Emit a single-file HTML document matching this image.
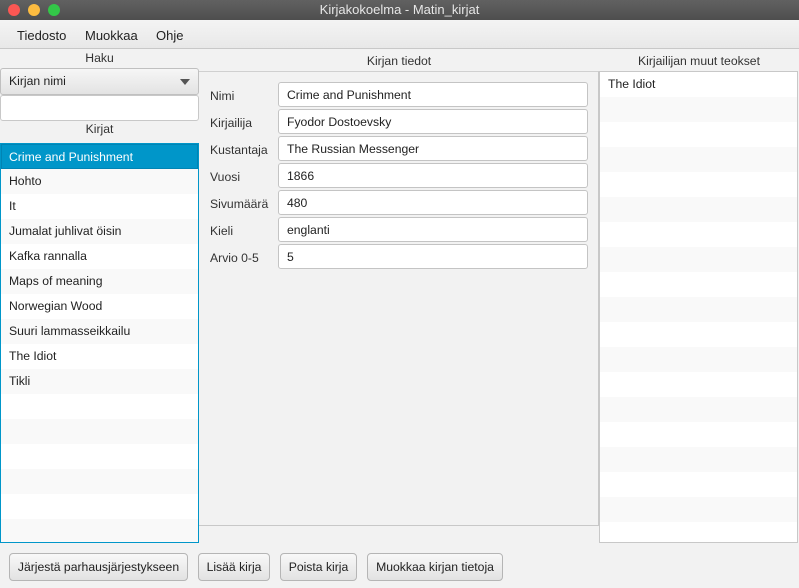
<!DOCTYPE html>
<html><head><meta charset="utf-8"><style>
*{box-sizing:border-box;margin:0;padding:0}
body{width:799px;height:588px;background:#f2f2f2;font-family:"Liberation Sans",sans-serif;font-size:12.2px;color:#333;position:relative;overflow:hidden}
.a{position:absolute}
.title{left:0;top:0;width:799px;height:20px;background:linear-gradient(#616161,#4e4e4e);color:#e6e6e6;text-align:center;line-height:20px;font-size:13px}
.dot{top:4px;width:12px;height:12px;border-radius:50%}
.menu{left:0;top:20px;width:799px;height:29px;background:linear-gradient(#f4f4f4,#e8e8e8);border-bottom:1px solid #c8c8c8}
.menu span{position:absolute;top:8px;font-size:13px;color:#222}
.lbl{text-align:center;color:#333}
.list{background:#fff;overflow:hidden}
.row{height:25px;line-height:25px;padding-left:8px;color:#222}
.row:nth-child(even){background:#f9f9f9}
.sel{background:#0096c9!important;color:#fff}
.field{left:278px;width:310px;height:25px;background:#fff;border:1px solid #c4c4c4;border-radius:3px;line-height:25px;padding-left:8px;color:#222}
.fl{left:210px;color:#333}
.btn{top:553px;height:28px;border:1px solid #b5b5b5;border-radius:4px;background:linear-gradient(#f8f8f8,#e2e2e2);line-height:26px;text-align:center;color:#222}
</style></head><body>
<div class="a title">Kirjakokoelma - Matin_kirjat</div>
<div class="a dot" style="left:8px;background:#fc5753"></div>
<div class="a dot" style="left:28px;background:#fdbc40"></div>
<div class="a dot" style="left:48px;background:#33c748"></div>
<div class="a menu"><span style="left:17px">Tiedosto</span><span style="left:85px">Muokkaa</span><span style="left:156px">Ohje</span></div>

<div class="a lbl" style="left:0;top:51px;width:199px">Haku</div>
<div class="a" style="left:0;top:68px;width:199px;height:27px;border:1px solid #c0c0c0;border-radius:3px;background:linear-gradient(#f6f6f6,#e3e3e3);line-height:25px;padding-left:8px;color:#222">Kirjan nimi<span style="position:absolute;right:8px;top:10px;border-left:5px solid transparent;border-right:5px solid transparent;border-top:6px solid #555"></span></div>
<div class="a" style="left:0;top:95px;width:199px;height:26px;background:#fff;border:1px solid #c8c8c8;border-radius:3px"></div>
<div class="a lbl" style="left:0;top:122px;width:199px">Kirjat</div>
<div class="a list" style="left:0;top:143px;width:199px;height:400px;border:1px solid #0096c9">
<div class="row sel" style="border:1px solid #0084b4;padding-left:7px">Crime and Punishment</div>
<div class="row">Hohto</div><div class="row">It</div><div class="row">Jumalat juhlivat öisin</div><div class="row">Kafka rannalla</div><div class="row">Maps of meaning</div><div class="row">Norwegian Wood</div><div class="row">Suuri lammasseikkailu</div><div class="row">The Idiot</div><div class="row">Tikli</div><div class="row"></div><div class="row"></div><div class="row"></div><div class="row"></div><div class="row"></div><div class="row"></div><div class="row"></div>
</div>

<div class="a" style="left:199px;top:71px;width:400px;height:455px;border-top:1px solid #d0d0d0;border-bottom:1px solid #c8c8c8;border-right:1px solid #c8c8c8"></div>
<div class="a lbl" style="left:199px;top:54px;width:400px">Kirjan tiedot</div>
<div class="a fl" style="top:89px">Nimi</div><div class="a field" style="top:82px">Crime and Punishment</div>
<div class="a fl" style="top:116px">Kirjailija</div><div class="a field" style="top:109px">Fyodor Dostoevsky</div>
<div class="a fl" style="top:143px">Kustantaja</div><div class="a field" style="top:136px">The Russian Messenger</div>
<div class="a fl" style="top:170px">Vuosi</div><div class="a field" style="top:163px">1866</div>
<div class="a fl" style="top:197px">Sivumäärä</div><div class="a field" style="top:190px">480</div>
<div class="a fl" style="top:224px">Kieli</div><div class="a field" style="top:217px">englanti</div>
<div class="a fl" style="top:251px">Arvio 0-5</div><div class="a field" style="top:244px">5</div>

<div class="a lbl" style="left:599px;top:54px;width:200px">Kirjailijan muut teokset</div>
<div class="a list" style="left:599px;top:71px;width:199px;height:472px;border:1px solid #c8c8c8">
<div class="row">The Idiot</div><div class="row"></div><div class="row"></div><div class="row"></div><div class="row"></div><div class="row"></div><div class="row"></div><div class="row"></div><div class="row"></div><div class="row"></div><div class="row"></div><div class="row"></div><div class="row"></div><div class="row"></div><div class="row"></div><div class="row"></div><div class="row"></div><div class="row"></div><div class="row"></div>
</div>

<div class="a btn" style="left:9px;width:179px">Järjestä parhausjärjestykseen</div>
<div class="a btn" style="left:198px;width:72px">Lisää kirja</div>
<div class="a btn" style="left:280px;width:77px">Poista kirja</div>
<div class="a btn" style="left:367px;width:136px">Muokkaa kirjan tietoja</div>
</body></html>
